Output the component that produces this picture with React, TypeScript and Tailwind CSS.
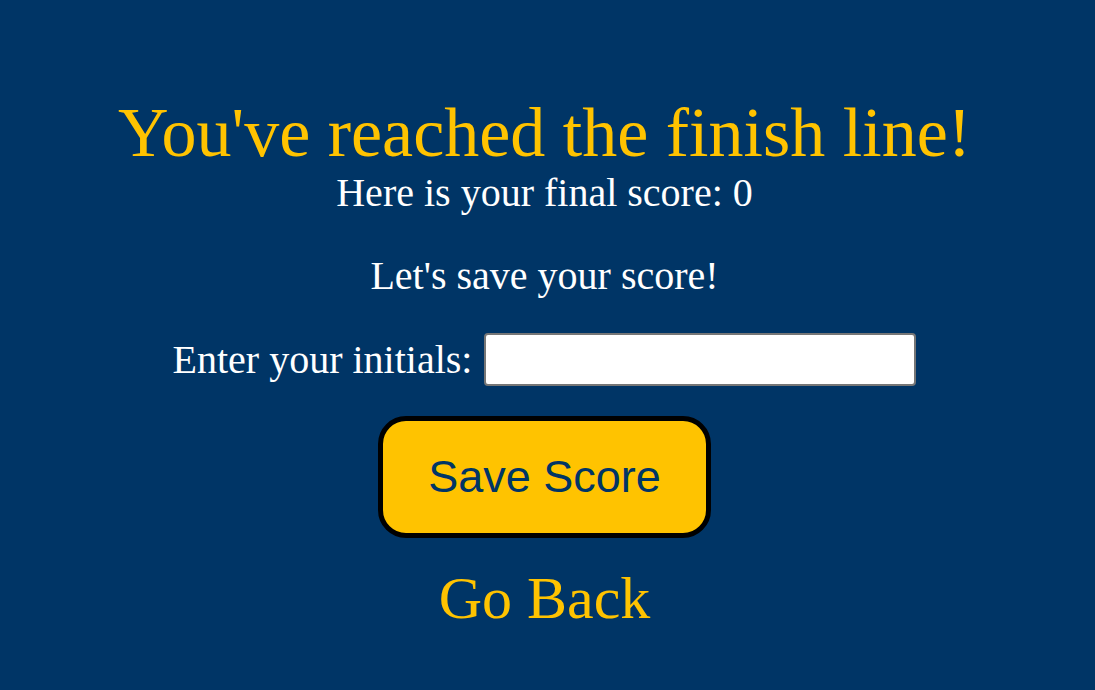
export default function App() {
  return (
    <div className="min-h-[690px] w-full bg-[#003566] font-['Liberation_Serif',serif] text-white">
      <div className="flex flex-col items-center pt-[98px] pr-[6px]">
        <h1 className="text-[70px] leading-[70px] text-[#ffc300]">You've reached the finish line!</h1>
        <p className="mt-[5px] text-[40px] leading-[40px]">Here is your final score: 0</p>
        <p className="mt-[43px] text-[40px] leading-[40px]">Let's save your score!</p>
        <div className="mt-[37px] flex items-center gap-[12px]">
          <label htmlFor="initials" className="text-[40px] leading-[40px]">
            Enter your initials:
          </label>
          <input
            id="initials"
            type="text"
            className="h-[53px] w-[432px] rounded-[4px] border-2 border-[#767676] bg-white px-2 text-[24px] text-black outline-none"
          />
        </div>
        <button
          type="button"
          className="mt-[30px] h-[122px] w-[333px] rounded-[28px] border-[5px] border-black bg-[#ffc300] font-['Liberation_Sans',Arial,sans-serif] text-[45px] text-[#003566]"
        >
          Save Score
        </button>
        <a href="#" className="mt-[30px] text-[60px] leading-[60px] text-[#ffc300]">
          Go Back
        </a>
      </div>
    </div>
  );
}
